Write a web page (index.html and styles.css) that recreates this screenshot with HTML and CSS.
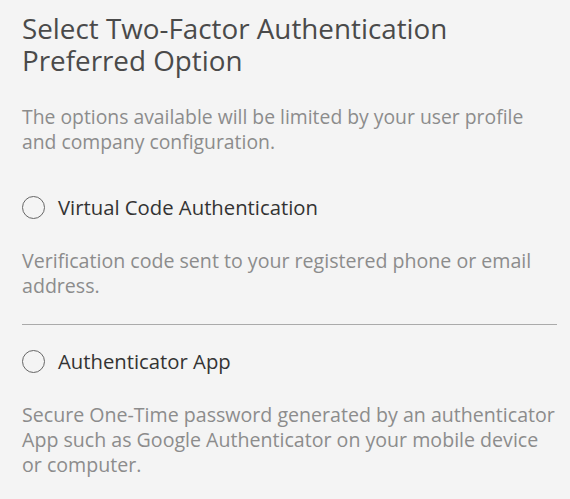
FILE: index.html
```html
<!DOCTYPE html>
<html>
<head>
<meta charset="utf-8">
<link rel="stylesheet" href="styles.css">
</head>
<body>
<div class="page">
  <h1 class="title">Select Two-Factor Authentication Preferred Option</h1>
  <p class="intro">The options available will be limited by your user profile and company configuration.</p>
  <div class="option">
    <label class="option-label"><span class="radio"></span>Virtual Code Authentication</label>
    <p class="desc">Verification code sent to your registered phone or email address.</p>
  </div>
  <hr class="divider">
  <div class="option">
    <label class="option-label"><span class="radio"></span>Authenticator App</label>
    <p class="desc">Secure One-Time password generated by an authenticator App such as Google Authenticator on your mobile device or computer.</p>
  </div>
</div>
</body>
</html>
```
FILE: styles.css
```css
html, body {
  margin: 0;
  padding: 0;
  background: #f4f4f4;
}
body {
  font-family: "Open Sans", "Noto Sans", sans-serif;
}
.page {
  padding: 12px 13px 0 22px;
}
.title {
  margin: 0;
  font-size: 27.8px;
  line-height: 32px;
  font-weight: 400;
  color: #4a4a4a;
  width: 480px;
}
.intro {
  margin: 28px 0 0;
  font-size: 19.35px;
  line-height: 25px;
  color: #8c8c8c;
}
.option {
  display: flex;
  flex-direction: column;
}
.option-label {
  display: flex;
  align-items: center;
  gap: 13px;
  font-size: 20.3px;
  color: #333;
  margin-top: 40px;
  line-height: 26px;
}
.radio {
  width: 21px;
  height: 21px;
  border: 1.5px solid #666;
  border-radius: 50%;
  flex: none;
}
.desc {
  margin: 28px 0 0;
  font-size: 19.6px;
  line-height: 25px;
  color: #8c8c8c;
}
.divider {
  margin: 26px 0 0;
  border: 0;
  border-top: 1px solid #aaa;
}
.divider + .option .option-label {
  margin-top: 23px;
}
```
